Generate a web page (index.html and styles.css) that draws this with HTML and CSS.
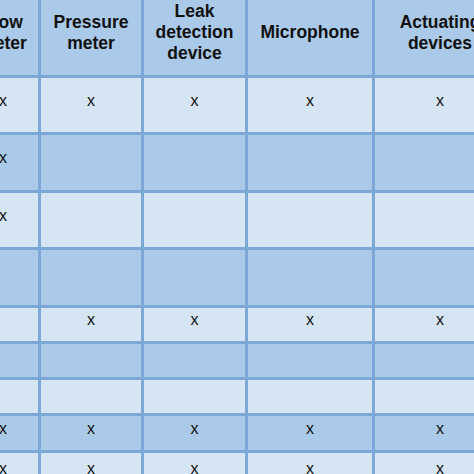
FILE: index.html
```html
<!DOCTYPE html>
<html>
<head>
<meta charset="utf-8">
<link rel="stylesheet" href="styles.css">
</head>
<body>
<div class="grid">
  <div class="cell head">Flow<br>meter</div>
  <div class="cell head">Pressure<br>meter</div>
  <div class="cell head">Leak<br>detection<br>device</div>
  <div class="cell head">Microphone</div>
  <div class="cell head">Actuating<br>devices</div>

  <div class="cell light">x</div><div class="cell light">x</div><div class="cell light">x</div><div class="cell light">x</div><div class="cell light">x</div>
  <div class="cell dark">x</div><div class="cell dark"></div><div class="cell dark"></div><div class="cell dark"></div><div class="cell dark"></div>
  <div class="cell light">x</div><div class="cell light"></div><div class="cell light"></div><div class="cell light"></div><div class="cell light"></div>
  <div class="cell dark"></div><div class="cell dark"></div><div class="cell dark"></div><div class="cell dark"></div><div class="cell dark"></div>
  <div class="cell light"></div><div class="cell light">x</div><div class="cell light">x</div><div class="cell light">x</div><div class="cell light">x</div>
  <div class="cell dark"></div><div class="cell dark"></div><div class="cell dark"></div><div class="cell dark"></div><div class="cell dark"></div>
  <div class="cell light"></div><div class="cell light"></div><div class="cell light"></div><div class="cell light"></div><div class="cell light"></div>
  <div class="cell dark">x</div><div class="cell dark">x</div><div class="cell dark">x</div><div class="cell dark">x</div><div class="cell dark">x</div>
  <div class="cell light">x</div><div class="cell light">x</div><div class="cell light">x</div><div class="cell light">x</div><div class="cell light">x</div>
</div>
</body>
</html>
```
FILE: styles.css
```css
html, body {
  margin: 0;
  padding: 0;
  overflow: hidden;
  background: #ffffff;
}
.grid {
  display: grid;
  grid-template-columns: 70px 100px 101px 124px 130px;
  grid-template-rows: 89px 54px 55px 54px 55px 33px 33px 33px 34px 40px;
  gap: 3px;
  background: #7ca8d8;
  width: 537px;
  margin-left: -32px;
  margin-top: -14px;
  font-family: "Liberation Sans", Arial, sans-serif;
  color: #111111;
}
.cell {
  display: flex;
  align-items: center;
  justify-content: center;
  text-align: center;
}
.head {
  background: #abc9e8;
  font-weight: bold;
  font-size: 17.5px;
  line-height: 21px;
  padding-top: 4px;
}
.light {
  background: #d6e5f4;
  font-size: 16px;
  padding-bottom: 9px;
}
.dark {
  background: #abcae9;
  font-size: 16px;
  padding-bottom: 9px;
}
```
